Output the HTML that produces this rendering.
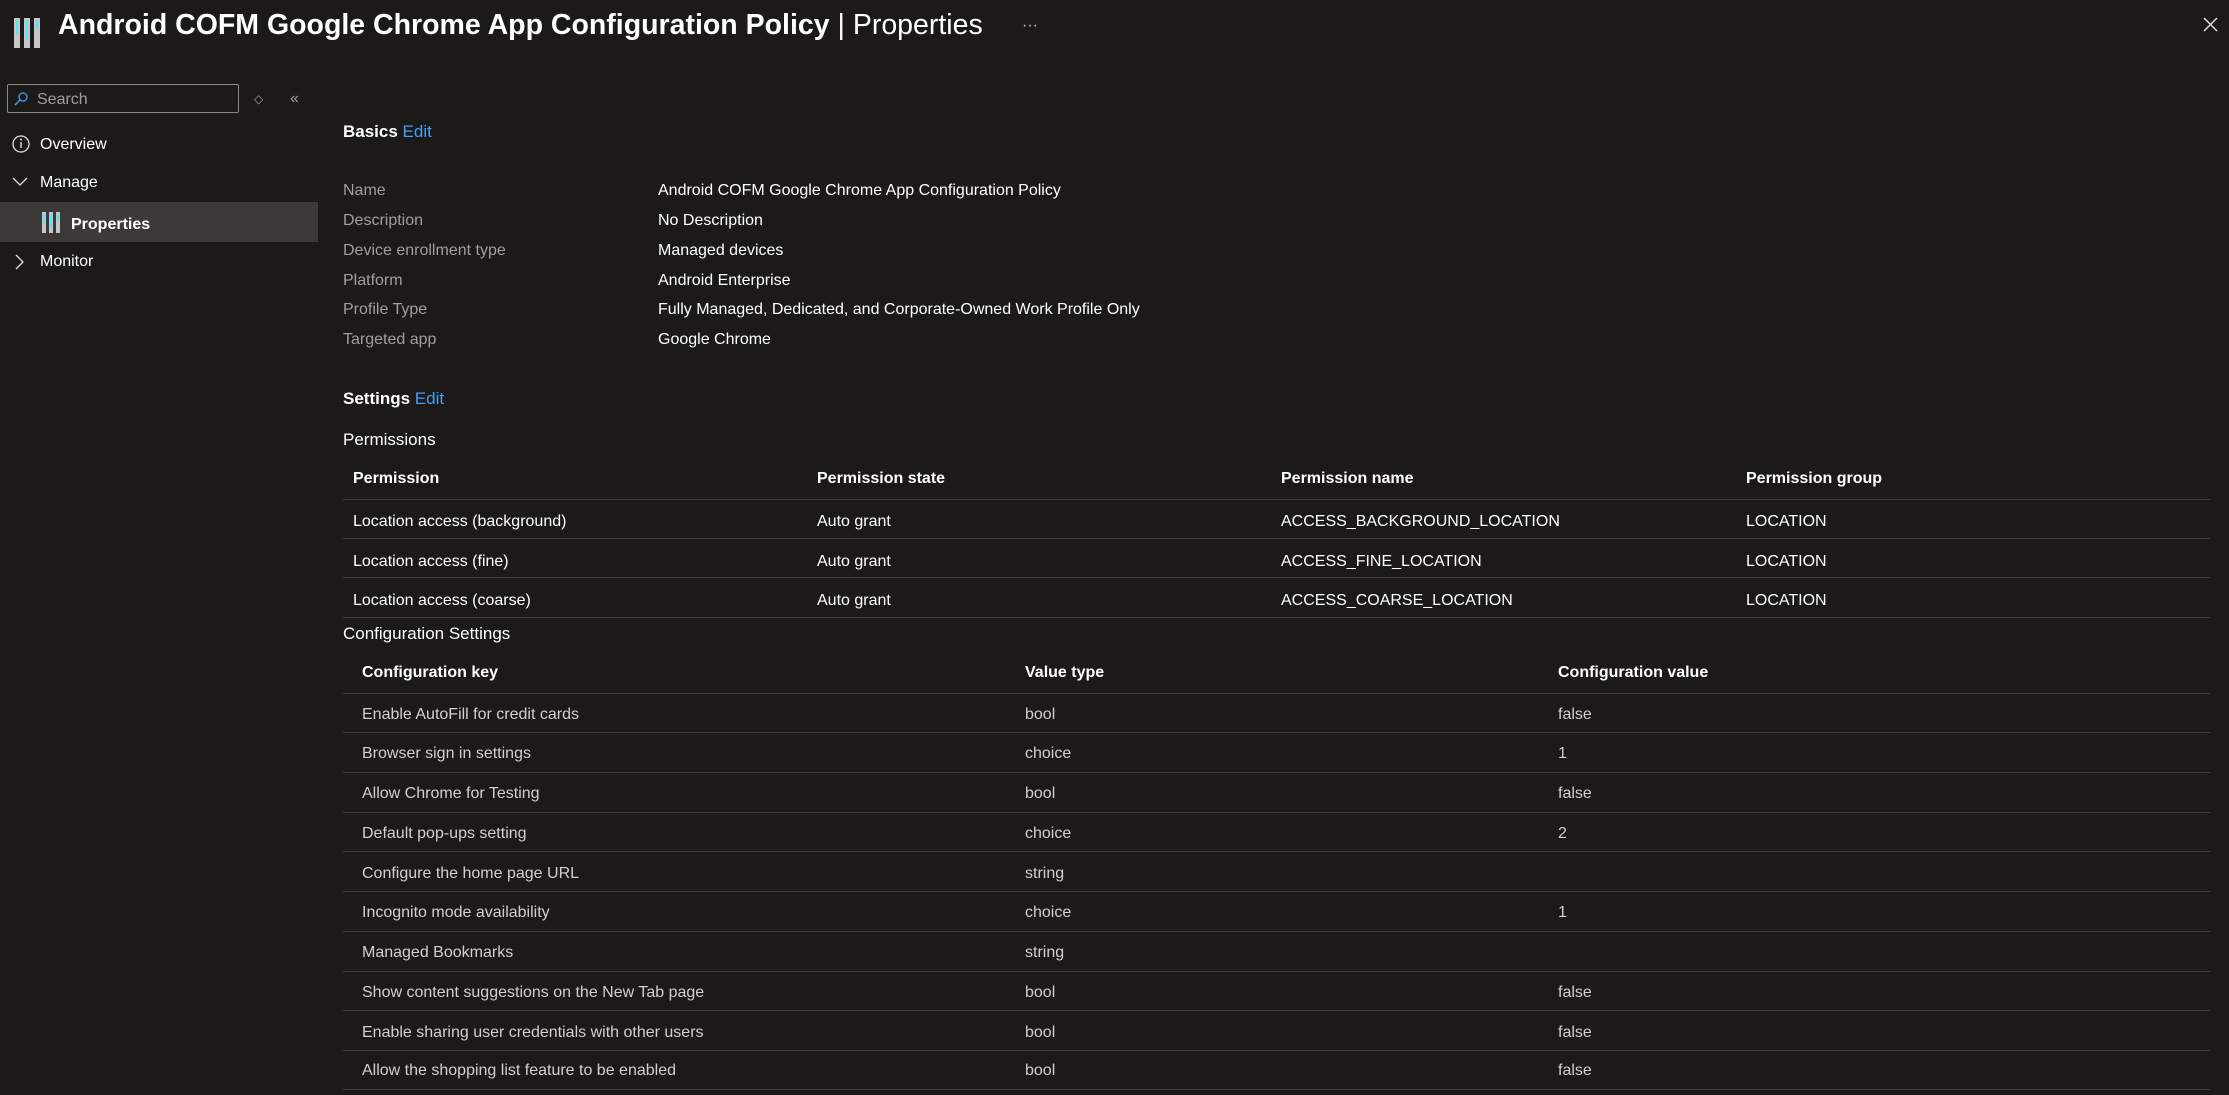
<!DOCTYPE html>
<html><head><meta charset="utf-8"><style>
body{margin:0;width:2229px;height:1095px;background:#1b1a19;overflow:hidden;font-family:"Liberation Sans",sans-serif;color:#fff;position:relative}
.a{position:absolute;white-space:nowrap;line-height:20px;font-size:16px;margin-top:2px}
.g{color:#a19f9d}.c{color:#d2d0ce}.b{font-weight:bold}
.ln{position:absolute;left:343px;width:1867px;height:1px;background:#3b3a39}
.lk{color:#479ef5;font-weight:normal}
</style></head><body>
<svg style="position:absolute;left:13px;top:14px" width="32" height="38" viewBox="0 0 32 38"><g fill="#c8c6c4"><rect x="1" y="4" width="6" height="30"/><rect x="11" y="4" width="6" height="30"/><rect x="21" y="4" width="6" height="30"/></g><g fill="#50e6ff"><rect x="3" y="6" width="2" height="14"/><rect x="13" y="6" width="2" height="20"/><rect x="23" y="6" width="2" height="10"/></g></svg>
<div class="a" style="left:58px;top:5px;font-size:28.5px;line-height:36px;font-weight:bold">Android COFM Google Chrome App Configuration Policy <span style="font-weight:normal">| Properties</span></div>
<div class="a" style="left:1022px;top:14px;color:#c8c6c4">···</div>
<svg style="position:absolute;left:2203px;top:17px" width="15" height="15"><path d="M1 1L14 14M14 1L1 14" stroke="#e0e0e0" stroke-width="1.5"/></svg>
<div style="position:absolute;left:7px;top:84px;width:230px;height:27px;border:1px solid #8a8886;border-radius:2px"></div>
<svg style="position:absolute;left:14px;top:92px" width="14" height="14"><circle cx="9" cy="5" r="4" fill="none" stroke="#479ef5" stroke-width="1.3"/><path d="M6 8L1 13" stroke="#479ef5" stroke-width="1.3"/></svg>
<div class="a g" style="left:37px;top:88px">Search</div>
<div class="a g" style="left:254px;top:87px;font-size:12px">◇</div>
<div class="a g" style="left:290px;top:87px">«</div>
<svg style="position:absolute;left:11px;top:134px" width="20" height="20"><circle cx="10" cy="10" r="8" fill="none" stroke="#e0e0e0" stroke-width="1.3"/><path d="M10 8v6" stroke="#e0e0e0" stroke-width="1.4"/><circle cx="10" cy="5.5" r="1" fill="#e0e0e0"/></svg>
<div class="a" style="left:40px;top:133px">Overview</div>
<svg style="position:absolute;left:12px;top:176px" width="16" height="12"><path d="M1 2l7 7 7-7" fill="none" stroke="#e0e0e0" stroke-width="1.3"/></svg>
<div class="a" style="left:40px;top:171px">Manage</div>
<div style="position:absolute;left:0;top:202px;width:318px;height:40px;background:#3b3a39"></div>
<svg style="position:absolute;left:42px;top:212px" width="18" height="21"><g fill="#c8c6c4"><rect x="0" y="0" width="4" height="21"/><rect x="7" y="0" width="4" height="21"/><rect x="14" y="0" width="4" height="21"/></g><g fill="#50e6ff"><rect x="1" y="2" width="2" height="9"/><rect x="8" y="2" width="2" height="13"/><rect x="15" y="2" width="2" height="7"/></g></svg>
<div class="a b" style="left:71px;top:213px">Properties</div>
<svg style="position:absolute;left:14px;top:254px" width="10" height="16"><path d="M2 1l7 7-7 7" fill="none" stroke="#e0e0e0" stroke-width="1.3"/></svg>
<div class="a" style="left:40px;top:250px">Monitor</div>

<div class="a b" style="left:343px;top:120px;font-size:17px">Basics <span class="lk">Edit</span></div>
<div class="a g" style="left:343px;top:179px">Name</div><div class="a" style="left:658px;top:179px">Android COFM Google Chrome App Configuration Policy</div>
<div class="a g" style="left:343px;top:209px">Description</div><div class="a" style="left:658px;top:209px">No Description</div>
<div class="a g" style="left:343px;top:239px">Device enrollment type</div><div class="a" style="left:658px;top:239px">Managed devices</div>
<div class="a g" style="left:343px;top:269px">Platform</div><div class="a" style="left:658px;top:269px">Android Enterprise</div>
<div class="a g" style="left:343px;top:298px">Profile Type</div><div class="a" style="left:658px;top:298px">Fully Managed, Dedicated, and Corporate-Owned Work Profile Only</div>
<div class="a g" style="left:343px;top:328px">Targeted app</div><div class="a" style="left:658px;top:328px">Google Chrome</div>
<div class="a b" style="left:343px;top:387px;font-size:17px">Settings <span class="lk">Edit</span></div>
<div class="a" style="left:343px;top:428px;font-size:17px">Permissions</div>
<div class="a b" style="left:353px;top:467px">Permission</div><div class="a b" style="left:817px;top:467px">Permission state</div><div class="a b" style="left:1281px;top:467px">Permission name</div><div class="a b" style="left:1746px;top:467px">Permission group</div>
<div class="ln" style="top:499px"></div>
<div class="a" style="left:353px;top:510px">Location access (background)</div><div class="a" style="left:817px;top:510px">Auto grant</div><div class="a" style="left:1281px;top:510px">ACCESS_BACKGROUND_LOCATION</div><div class="a" style="left:1746px;top:510px">LOCATION</div>
<div class="ln" style="top:538px"></div>
<div class="a" style="left:353px;top:550px">Location access (fine)</div><div class="a" style="left:817px;top:550px">Auto grant</div><div class="a" style="left:1281px;top:550px">ACCESS_FINE_LOCATION</div><div class="a" style="left:1746px;top:550px">LOCATION</div>
<div class="ln" style="top:577px"></div>
<div class="a" style="left:353px;top:589px">Location access (coarse)</div><div class="a" style="left:817px;top:589px">Auto grant</div><div class="a" style="left:1281px;top:589px">ACCESS_COARSE_LOCATION</div><div class="a" style="left:1746px;top:589px">LOCATION</div>
<div class="ln" style="top:617px"></div>
<div class="a" style="left:343px;top:622px;font-size:17px">Configuration Settings</div>
<div class="a b" style="left:362px;top:661px">Configuration key</div><div class="a b" style="left:1025px;top:661px">Value type</div><div class="a b" style="left:1558px;top:661px">Configuration value</div>
<div class="ln" style="top:693px"></div>
<div class="a c" style="left:362px;top:703px">Enable AutoFill for credit cards</div><div class="a c" style="left:1025px;top:703px">bool</div><div class="a c" style="left:1558px;top:703px">false</div>
<div class="ln" style="top:732px"></div>
<div class="a c" style="left:362px;top:742px">Browser sign in settings</div><div class="a c" style="left:1025px;top:742px">choice</div><div class="a c" style="left:1558px;top:742px">1</div>
<div class="ln" style="top:772px"></div>
<div class="a c" style="left:362px;top:782px">Allow Chrome for Testing</div><div class="a c" style="left:1025px;top:782px">bool</div><div class="a c" style="left:1558px;top:782px">false</div>
<div class="ln" style="top:812px"></div>
<div class="a c" style="left:362px;top:822px">Default pop-ups setting</div><div class="a c" style="left:1025px;top:822px">choice</div><div class="a c" style="left:1558px;top:822px">2</div>
<div class="ln" style="top:851px"></div>
<div class="a c" style="left:362px;top:862px">Configure the home page URL</div><div class="a c" style="left:1025px;top:862px">string</div>
<div class="ln" style="top:891px"></div>
<div class="a c" style="left:362px;top:901px">Incognito mode availability</div><div class="a c" style="left:1025px;top:901px">choice</div><div class="a c" style="left:1558px;top:901px">1</div>
<div class="ln" style="top:931px"></div>
<div class="a c" style="left:362px;top:941px">Managed Bookmarks</div><div class="a c" style="left:1025px;top:941px">string</div>
<div class="ln" style="top:971px"></div>
<div class="a c" style="left:362px;top:981px">Show content suggestions on the New Tab page</div><div class="a c" style="left:1025px;top:981px">bool</div><div class="a c" style="left:1558px;top:981px">false</div>
<div class="ln" style="top:1010px"></div>
<div class="a c" style="left:362px;top:1021px">Enable sharing user credentials with other users</div><div class="a c" style="left:1025px;top:1021px">bool</div><div class="a c" style="left:1558px;top:1021px">false</div>
<div class="ln" style="top:1050px"></div>
<div class="a c" style="left:362px;top:1059px">Allow the shopping list feature to be enabled</div><div class="a c" style="left:1025px;top:1059px">bool</div><div class="a c" style="left:1558px;top:1059px">false</div>
<div class="ln" style="top:1089px"></div>
</body></html>
